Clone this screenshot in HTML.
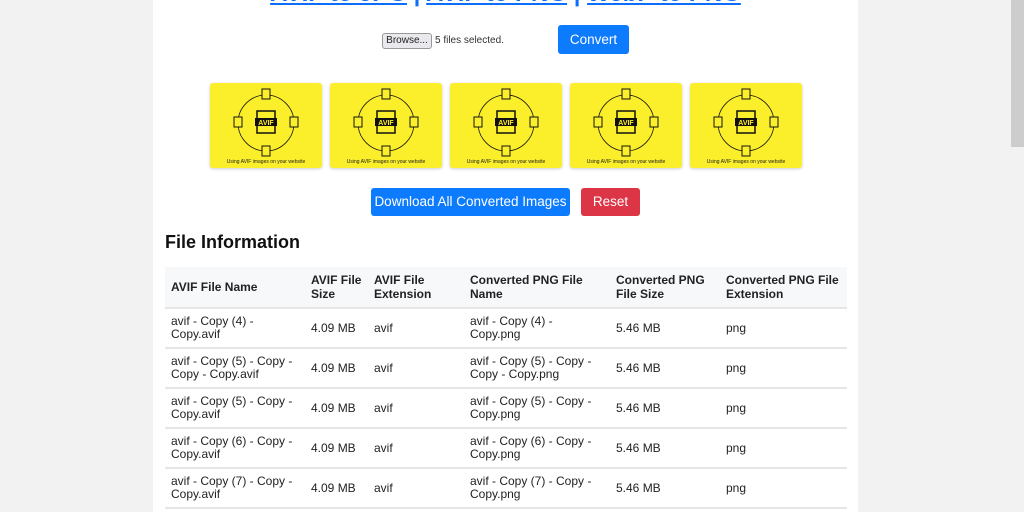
<!DOCTYPE html>
<html><head><meta charset="utf-8"><style>
body{margin:0;width:1024px;height:512px;overflow:hidden;background:#f2f2f2;font-family:"Liberation Sans",Arial,sans-serif;position:relative}
.wrap{position:absolute;left:153px;top:0;width:705px;height:512px;background:#fff}
.sb{position:absolute;left:1011px;top:0;width:13px;height:147px;background:#cdcdcd}
.title{position:absolute;left:0;width:1011px;top:-22px;text-align:center;font-size:24px;font-weight:bold;color:#0d6efd;line-height:32px;white-space:nowrap}
.title a{color:#0d6efd;text-decoration:underline}
.abs{position:absolute}
.btn{position:absolute;color:#fff;font-size:13.5px;text-align:center;border-radius:3px;white-space:nowrap;font-family:"Liberation Sans",sans-serif}
.thumb{position:absolute;top:83px;width:112px;height:85px;background:#fbee2a;border-radius:3px;box-shadow:0 1px 3px rgba(0,0,0,.2)}
table{position:absolute;left:165px;top:267px;width:682px;border-collapse:collapse;font-size:12px;color:#222}
th{background:#f7f8f9;text-align:left;font-weight:bold;height:40px;padding:0 6px;line-height:14px;border-bottom:2px solid #e6e6e6}
td{height:38px;padding:0 6px;line-height:13px;border-bottom:2px solid #e6e6e6}
</style></head><body>
<div class="wrap"></div>
<div class="sb"></div>
<div class="title"><a>AVIF to JPG</a> | <a>AVIF to PNG</a> | <a>WebP to PNG</a></div>
<div class="abs" style="left:382px;top:33px;width:48px;height:14px;border:1px solid #999;background:#e9e9ed;border-radius:3px;font-size:10px;line-height:14px;text-align:center;color:#222">Browse...</div>
<div class="abs" style="left:435px;top:35px;font-size:10px;color:#333">5 files selected.</div>
<div class="btn" style="left:558px;top:25px;width:71px;height:29px;line-height:29px;background:#0d7bfd">Convert</div>
<div class="btn" style="left:371px;top:188px;width:199px;height:28px;line-height:28px;background:#0d7bfd">Download All Converted Images</div>
<div class="btn" style="left:581px;top:188px;width:59px;height:28px;line-height:28px;background:#dc3545">Reset</div>

<div class="thumb" style="left:210px"><svg width="112" height="85" viewBox="0 0 112 85"><g fill="none" stroke="#111" stroke-width="0.8"><circle cx="56" cy="40" r="28"/></g><rect x="47" y="28" width="18" height="22" fill="#fbee2a" stroke="#111" stroke-width="1.5"/><rect x="45" y="35" width="22" height="8" fill="#111"/><text x="56" y="42" font-size="7" font-weight="bold" fill="#fbee2a" text-anchor="middle">AVIF</text><g fill="#fbee2a" stroke="#111"><rect x="52" y="6" width="8" height="10"/><rect x="80" y="34" width="8" height="10"/><rect x="52" y="63" width="8" height="10"/><rect x="24" y="34" width="8" height="10"/></g><text x="56" y="80" font-size="5" text-anchor="middle" fill="#222">Using AVIF images on your website</text></svg></div>
<div class="thumb" style="left:330px"><svg width="112" height="85" viewBox="0 0 112 85"><g fill="none" stroke="#111" stroke-width="0.8"><circle cx="56" cy="40" r="28"/></g><rect x="47" y="28" width="18" height="22" fill="#fbee2a" stroke="#111" stroke-width="1.5"/><rect x="45" y="35" width="22" height="8" fill="#111"/><text x="56" y="42" font-size="7" font-weight="bold" fill="#fbee2a" text-anchor="middle">AVIF</text><g fill="#fbee2a" stroke="#111"><rect x="52" y="6" width="8" height="10"/><rect x="80" y="34" width="8" height="10"/><rect x="52" y="63" width="8" height="10"/><rect x="24" y="34" width="8" height="10"/></g><text x="56" y="80" font-size="5" text-anchor="middle" fill="#222">Using AVIF images on your website</text></svg></div>
<div class="thumb" style="left:450px"><svg width="112" height="85" viewBox="0 0 112 85"><g fill="none" stroke="#111" stroke-width="0.8"><circle cx="56" cy="40" r="28"/></g><rect x="47" y="28" width="18" height="22" fill="#fbee2a" stroke="#111" stroke-width="1.5"/><rect x="45" y="35" width="22" height="8" fill="#111"/><text x="56" y="42" font-size="7" font-weight="bold" fill="#fbee2a" text-anchor="middle">AVIF</text><g fill="#fbee2a" stroke="#111"><rect x="52" y="6" width="8" height="10"/><rect x="80" y="34" width="8" height="10"/><rect x="52" y="63" width="8" height="10"/><rect x="24" y="34" width="8" height="10"/></g><text x="56" y="80" font-size="5" text-anchor="middle" fill="#222">Using AVIF images on your website</text></svg></div>
<div class="thumb" style="left:570px"><svg width="112" height="85" viewBox="0 0 112 85"><g fill="none" stroke="#111" stroke-width="0.8"><circle cx="56" cy="40" r="28"/></g><rect x="47" y="28" width="18" height="22" fill="#fbee2a" stroke="#111" stroke-width="1.5"/><rect x="45" y="35" width="22" height="8" fill="#111"/><text x="56" y="42" font-size="7" font-weight="bold" fill="#fbee2a" text-anchor="middle">AVIF</text><g fill="#fbee2a" stroke="#111"><rect x="52" y="6" width="8" height="10"/><rect x="80" y="34" width="8" height="10"/><rect x="52" y="63" width="8" height="10"/><rect x="24" y="34" width="8" height="10"/></g><text x="56" y="80" font-size="5" text-anchor="middle" fill="#222">Using AVIF images on your website</text></svg></div>
<div class="thumb" style="left:690px"><svg width="112" height="85" viewBox="0 0 112 85"><g fill="none" stroke="#111" stroke-width="0.8"><circle cx="56" cy="40" r="28"/></g><rect x="47" y="28" width="18" height="22" fill="#fbee2a" stroke="#111" stroke-width="1.5"/><rect x="45" y="35" width="22" height="8" fill="#111"/><text x="56" y="42" font-size="7" font-weight="bold" fill="#fbee2a" text-anchor="middle">AVIF</text><g fill="#fbee2a" stroke="#111"><rect x="52" y="6" width="8" height="10"/><rect x="80" y="34" width="8" height="10"/><rect x="52" y="63" width="8" height="10"/><rect x="24" y="34" width="8" height="10"/></g><text x="56" y="80" font-size="5" text-anchor="middle" fill="#222">Using AVIF images on your website</text></svg></div>

<div class="abs" style="left:165px;top:232px;font-size:18px;font-weight:bold;color:#111">File Information</div>
<table>
<colgroup><col style="width:140px"><col style="width:63px"><col style="width:96px"><col style="width:146px"><col style="width:110px"><col></colgroup>
<tr><th>AVIF File Name</th><th>AVIF File Size</th><th>AVIF File Extension</th><th>Converted PNG File Name</th><th>Converted PNG File Size</th><th>Converted PNG File Extension</th></tr>
<tr><td>avif - Copy (4) - Copy.avif</td><td>4.09 MB</td><td>avif</td><td>avif - Copy (4) - Copy.png</td><td>5.46 MB</td><td>png</td></tr>
<tr><td>avif - Copy (5) - Copy - Copy - Copy.avif</td><td>4.09 MB</td><td>avif</td><td>avif - Copy (5) - Copy - Copy - Copy.png</td><td>5.46 MB</td><td>png</td></tr>
<tr><td>avif - Copy (5) - Copy - Copy.avif</td><td>4.09 MB</td><td>avif</td><td>avif - Copy (5) - Copy - Copy.png</td><td>5.46 MB</td><td>png</td></tr>
<tr><td>avif - Copy (6) - Copy - Copy.avif</td><td>4.09 MB</td><td>avif</td><td>avif - Copy (6) - Copy - Copy.png</td><td>5.46 MB</td><td>png</td></tr>
<tr><td>avif - Copy (7) - Copy - Copy.avif</td><td>4.09 MB</td><td>avif</td><td>avif - Copy (7) - Copy - Copy.png</td><td>5.46 MB</td><td>png</td></tr>
</table>
</body></html>
